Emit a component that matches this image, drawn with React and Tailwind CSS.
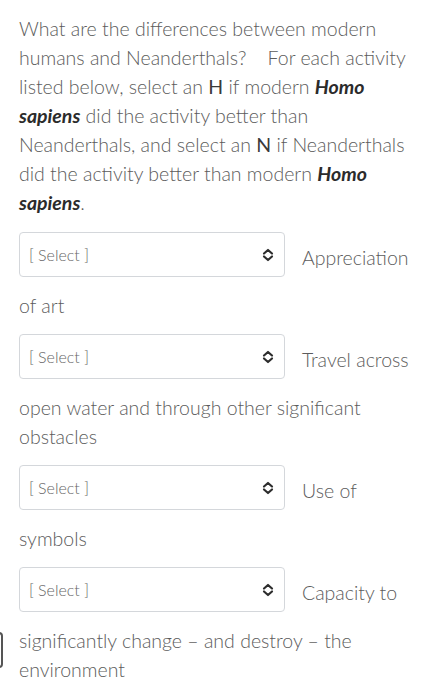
import { useState } from "react";

const items = [
  { first: "Appreciation", rest: "of art" },
  { first: "Travel across", rest: "open water and through other significant obstacles" },
  { first: "Use of", rest: "symbols" },
  { first: "Capacity to", rest: "significantly change – and destroy – the environment" },
];

function Chevrons() {
  return (
    <svg width="12" height="14" viewBox="0 0 12 14" fill="none" stroke="#2d2d2d" strokeWidth="2.2" strokeLinecap="round" strokeLinejoin="round">
      <path d="M2 5.5 L6 2 L10 5.5" />
      <path d="M2 8.5 L6 12 L10 8.5" />
    </svg>
  );
}

function SelectBox() {
  return (
    <span className="inline-flex align-[4px] items-center justify-between w-[266px] h-[45px] my-[14px] mr-[17px] px-[9px] pr-[10px] border border-[#d4d7db] rounded-[4px] bg-white text-[16px] font-light text-[#666] leading-none">
      <span>[ Select ]</span>
      <Chevrons />
    </span>
  );
}

export default function App() {
  const [answers] = useState(items);
  return (
    <div className="relative min-h-[700px] bg-white px-[19px] pt-[14px] font-['Lato','Noto_Sans',sans-serif] font-light text-[19.5px] leading-[29px] text-[#5c5c5c]">
      <p>
        What are the differences between modern humans and Neanderthals?&nbsp;&nbsp;&nbsp; For each activity listed below, select an{" "}
        <span className="font-normal text-[#3a3a3a]">H</span> if modern{" "}
        <strong className="italic font-bold text-[#2b2b2b]">Homo sapiens</strong> did the activity better than Neanderthals, and select an{" "}
        <span className="font-normal text-[#3a3a3a]">N</span> if Neanderthals did the activity better than modern{" "}
        <strong className="italic font-bold text-[#2b2b2b]">Homo sapiens</strong>.
      </p>
      <p className="mt-[1px]">
        {answers.map((item) => (
          <span key={item.first}>
            <SelectBox />
            {item.first} {item.rest}{" "}
            <br />
          </span>
        ))}
      </p>
      <div className="absolute left-[-10px] top-[632px] w-[13px] h-[36px] border-2 border-[#555] rounded-[4px]" />
    </div>
  );
}
